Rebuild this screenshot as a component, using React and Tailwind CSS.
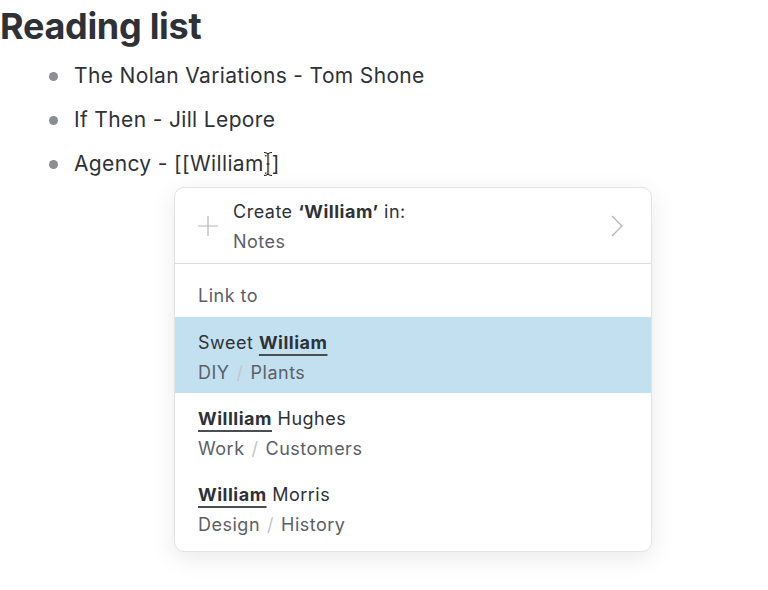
import React from "react";

const books = [
  "The Nolan Variations - Tom Shone",
  "If Then - Jill Lepore",
  "Agency - [[William]]",
];

const links = [
  { bold: "Sweet ", match: "William", post: "", path: ["DIY", "Plants"], active: true },
  { match: "Willliam", post: " Hughes", path: ["Work", "Customers"] },
  { match: "William", post: " Morris", path: ["Design", "History"] },
];

function Match({ children }) {
  return (
    <span className="font-bold underline decoration-2 underline-offset-[5px] decoration-[#4a4e53]">
      {children}
    </span>
  );
}

function LinkRow(props) {
  return (
    <div
      className={`px-[23px] pt-[11px] pb-[5px] ${props.active ? "bg-[#c3e0f1]" : ""}`}
    >
      <div className="leading-[30px] text-[#2e3236]">
        {props.bold && <span>{props.bold}</span>}
        <Match>{props.match}</Match>
        {props.post}
      </div>
      <div className="leading-[30px] text-[#5c6066]">
        {props.path[0]}
        <span className="text-[#c3c6ca] mx-[7px]">/</span>
        {props.path[1]}
      </div>
    </div>
  );
}

export default function App() {
  return (
    <div
      className="relative w-[768px] h-[590px] overflow-hidden bg-white text-[#2e3236]"
      style={{ fontFamily: "Inter, 'Noto Sans', sans-serif" }}
    >
      <h1 className="mt-[4px] text-[36px] leading-[44px] font-bold tracking-[-0.3px]">
        Reading list
      </h1>
      <ul className="mt-[6px]">
        {books.map((b) => (
          <li key={b} className="flex items-center text-[21px] leading-[44px] tracking-[0.35px]">
            <span className="ml-[49px] mr-[16px] w-[9px] h-[9px] rounded-full bg-[#8b8e92]" />
            {b}
          </li>
        ))}
      </ul>

      {/* text cursor */}
      <svg
        className="absolute left-[262px] top-[151px]"
        width="12"
        height="26"
        viewBox="0 0 12 26"
        fill="none"
      >
        <path
          d="M2 1.5c2 0 3.3.5 4 1.5.7-1 2-1.5 4-1.5M6 3v20M2 24.5c2 0 3.3-.5 4-1.5.7 1 2 1.5 4 1.5M4.5 13h3"
          stroke="#fff"
          strokeWidth="3"
        />
        <path
          d="M2 1.5c2 0 3.3.5 4 1.5.7-1 2-1.5 4-1.5M6 3v20M2 24.5c2 0 3.3-.5 4-1.5.7 1 2 1.5 4 1.5M4.5 13h3"
          stroke="#111"
          strokeWidth="1.2"
        />
      </svg>

      <div className="absolute left-[174px] top-[187px] w-[478px] pb-[6px] bg-white rounded-[10px] border border-[#e1e3e6] shadow-[0_6px_24px_rgba(0,0,0,0.09)] overflow-hidden text-[18px] tracking-[0.5px]">
        <div className="flex items-center h-[76px] border-b border-[#d9dce0]">
          <svg className="ml-[23px] mr-[15px]" width="20" height="20" viewBox="0 0 20 20">
            <path d="M10 0v20M0 10h20" stroke="#b3b6ba" strokeWidth="1.2" />
          </svg>
          <div className="flex-1 mt-[2px]">
            <div className="leading-[30px]">
              Create <span className="font-bold">‘William’</span> in:
            </div>
            <div className="leading-[30px] text-[#5c6066]">Notes</div>
          </div>
          <svg className="mr-[28px]" width="12" height="22" viewBox="0 0 12 22" fill="none">
            <path d="M1 1l10 10L1 21" stroke="#b3b6ba" strokeWidth="1.3" />
          </svg>
        </div>
        <div className="h-[53px] px-[23px] pt-[17px] leading-[30px] text-[#5c6066]">
          Link to
        </div>
        {links.map((l) => (
          <LinkRow key={l.match + l.post} {...l} />
        ))}
      </div>
    </div>
  );
}
